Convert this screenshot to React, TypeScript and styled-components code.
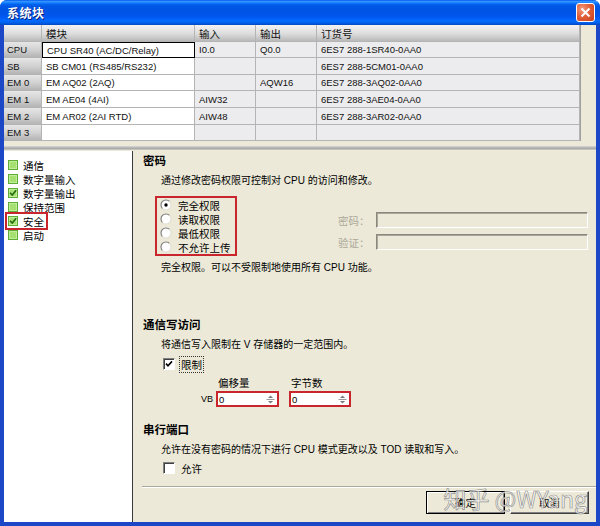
import React from 'react';
import styled, { createGlobalStyle } from 'styled-components';

const GlobalStyle = createGlobalStyle`
  html, body {
    margin: 0;
    padding: 0;
    background: #ffffff;
  }
  body {
    font-family: "Liberation Sans", "Noto Sans CJK SC", sans-serif;
    color: #000;
  }
`;

const Window = styled.div`
  position: relative;
  width: 600px;
  height: 526px;
  display: flex;
  flex-direction: column;
  background: #1c47c6;
  border-radius: 7px 7px 0 0;
  overflow: hidden;
`;

const TitleBar = styled.div`
  flex: none;
  height: 25px;
  display: flex;
  align-items: center;
  justify-content: space-between;
  padding: 0 5px 0 7px;
  background: linear-gradient(
    to bottom,
    #0058ee 0%,
    #3593ff 6%,
    #127dff 12%,
    #0262ee 18%,
    #0057e5 26%,
    #0054e3 40%,
    #0055eb 60%,
    #005bf5 72%,
    #026afe 82%,
    #0062ef 90%,
    #0048c0 100%
  );
`;

const Title = styled.span`
  color: #fff;
  font-size: 12px;
  font-weight: bold;
  letter-spacing: 0.5px;
  text-shadow: 1px 1px 0 #0a1f78;
`;

const CloseButton = styled.div`
  width: 19px;
  height: 19px;
  box-sizing: border-box;
  border: 1px solid #fff;
  border-radius: 3px;
  background: radial-gradient(circle at 30% 30%, #f09a7c 0%, #e2603a 45%, #c4401a 100%);
  display: flex;
  align-items: center;
  justify-content: center;
`;

const Frame = styled.div`
  flex: 1;
  display: flex;
  flex-direction: column;
  margin: 0 4px 4px 4px;
  background: #ece9d8;
  min-height: 0;
`;

const GridWrap = styled.div`
  flex: none;
  display: flex;
`;

const Grid = styled.div`
  display: grid;
  grid-template-columns: 38px 153px 61px 61px 263px;
  grid-template-rows: 17px 16px 17px 16px 17px 17px 16px;
  border-right: 1px solid #a0a0a0;
`;

type CellKind = 'corner' | 'head' | 'rowhead' | 'module' | 'data';

const Cell = styled.div<{ $kind: CellKind; $focus?: boolean }>`
  box-sizing: border-box;
  display: flex;
  align-items: center;
  white-space: nowrap;
  overflow: hidden;
  padding-left: ${(p) => (p.$kind === 'rowhead' || p.$kind === 'corner' ? '3px' : '4px')};
  font-size: ${(p) => (p.$kind === 'head' ? '10.5px' : '9.5px')};
  color: #111;
  border-right: 1px solid #b4b4b4;
  border-bottom: 1px solid #b4b4b4;
  background: ${(p) =>
    p.$kind === 'head' || p.$kind === 'corner'
      ? 'linear-gradient(to bottom, #f2f2f2 0%, #dcdcdc 55%, #b9b9b9 100%)'
      : p.$kind === 'rowhead'
      ? 'linear-gradient(to bottom, #e6e6e6 0%, #d2d2d2 50%, #b4b4b4 100%)'
      : p.$kind === 'module'
      ? '#ffffff'
      : '#ececee'};
  ${(p) => (p.$focus ? 'border: 1px solid #000;' : '')}
`;

const Splitter = styled.div`
  flex: none;
  height: 4px;
  margin: 5px 0 1px 0;
  background: linear-gradient(to bottom, #d8d8d8, #a8a8a8 60%, #d4d2c6);
`;

const Lower = styled.div`
  flex: 1;
  display: flex;
  min-height: 0;
`;

const Tree = styled.div`
  width: 129px;
  box-sizing: border-box;
  flex: none;
  background: #fff;
  border-right: 1px solid #3a3a3a;
  padding: 7px 0 0 4px;
`;

const TreeItem = styled.div<{ $marked?: boolean }>`
  display: flex;
  align-items: center;
  gap: 5px;
  height: 14px;
  width: ${(p) => (p.$marked ? '38px' : 'auto')};
  font-size: 10.5px;
  ${(p) => (p.$marked ? 'outline: 2px solid #c8262c; outline-offset: 0px; margin-left: -1px; padding-left: 1px;' : '')}
`;

const Content = styled.div`
  flex: 1;
  display: flex;
  flex-direction: column;
  padding: 3px 8px 8px 10px;
  min-width: 0;
`;

const Heading = styled.div<{ $gap?: number }>`
  font-size: 11.5px;
  font-weight: bold;
  line-height: 14px;
  margin-top: ${(p) => p.$gap ?? 0}px;
`;

const Desc = styled.div<{ $gap?: number }>`
  font-size: 10px;
  line-height: 14px;
  margin: ${(p) => p.$gap ?? 6}px 0 0 18px;
  white-space: nowrap;
`;

const RadioRow = styled.div`
  display: flex;
  align-items: flex-start;
  margin-top: 8px;
`;

const RadioBox = styled.div`
  margin-left: 12px;
  width: 82px;
  box-sizing: border-box;
  border: 2px solid #c8262c;
`;

const RadioItem = styled.div`
  display: flex;
  align-items: center;
  gap: 6px;
  height: 14px;
  padding-left: 3px;
  font-size: 10.5px;
  white-space: nowrap;
`;

const Fields = styled.div`
  margin-left: auto;
  margin-top: 16px;
  display: grid;
  grid-template-columns: 38px 212px;
  row-gap: 6px;
  align-items: center;
`;

const FieldLabel = styled.span`
  font-size: 10.5px;
  color: #aca899;
`;

const DisabledInput = styled.div`
  height: 16px;
  box-sizing: border-box;
  border: 1px solid;
  border-color: #8a887c #ffffff #ffffff #8a887c;
  box-shadow: inset 1px 1px 0 #a9a79a;
  background: #ece9d8;
`;

const CheckRow = styled.div<{ $gap: number }>`
  display: flex;
  align-items: center;
  gap: 5px;
  height: 14px;
  margin: ${(p) => p.$gap}px 0 0 20px;
  font-size: 10.5px;
`;

const CheckBox = styled.span`
  width: 12px;
  height: 12px;
  box-sizing: border-box;
  flex: none;
  background: #fff;
  border: 1px solid;
  border-color: #808080 #ffffff #ffffff #808080;
  box-shadow: inset 1px 1px 0 #404040;
  display: flex;
  align-items: center;
  justify-content: center;
`;

const FocusLabel = styled.span<{ $focus?: boolean }>`
  padding: 0 1px;
  outline: ${(p) => (p.$focus ? '1px dotted #333' : 'none')};
`;

const SpinArea = styled.div`
  display: flex;
  align-items: flex-end;
  margin: 5px 0 0 58px;
`;

const VbLabel = styled.span`
  font-size: 9px;
  line-height: 16px;
  width: 15px;
`;

const SpinColumn = styled.div<{ $gap?: number }>`
  display: flex;
  flex-direction: column;
  margin-left: ${(p) => p.$gap ?? 0}px;
`;

const SpinLabel = styled.span`
  font-size: 10.5px;
  line-height: 14px;
  padding-left: 2px;
  margin-bottom: 1px;
`;

const SpinBox = styled.div<{ $w: number }>`
  width: ${(p) => p.$w}px;
  height: 16px;
  box-sizing: border-box;
  border: 2px solid #c8262c;
  background: #fff;
  display: flex;
  align-items: center;
  justify-content: space-between;
  font-size: 9.5px;
  padding: 0 1px 0 1px;
`;

const Footer = styled.div`
  margin-top: auto;
  display: flex;
  flex-direction: column;
`;

const Separator = styled.div`
  height: 0;
  border-top: 1px solid #aca899;
  border-bottom: 1px solid #fff;
  margin: 0 -8px 0 -1px;
`;

const Buttons = styled.div`
  display: flex;
  justify-content: flex-end;
  gap: 5px;
  margin: 3px -1px 0 0;
`;

const Button = styled.button<{ $default?: boolean }>`
  width: 79px;
  height: 23px;
  font-family: inherit;
  font-size: 10.5px;
  color: #000;
  background: #ece9d8;
  border: 1px solid;
  border-color: ${(p) => (p.$default ? '#000' : '#fff #404040 #404040 #fff')};
  box-shadow: ${(p) =>
    p.$default
      ? 'inset 1px 1px 0 #fff, inset -1px -1px 0 #808080'
      : 'inset -1px -1px 0 #808080'};
  padding: 0;
`;

const Watermark = styled.div`
  position: absolute;
  right: 13px;
  bottom: 15px;
  font-family: "Noto Sans CJK SC", "Liberation Sans", sans-serif;
  font-size: 23px;
  line-height: 26px;
  color: rgba(255, 255, 255, 0.8);
  -webkit-text-stroke: 0.7px rgba(110, 110, 110, 0.75);
  pointer-events: none;
  white-space: nowrap;
`;

const TreeIcon: React.FC<{ checked?: boolean }> = ({ checked }) => (
  <svg width="10" height="10" viewBox="0 0 10 10">
    <rect x="0.5" y="0.5" width="9" height="9" fill="#c2ec9c" stroke="#5fae34" />
    <rect x="2" y="2" width="6" height="6" fill="#a6e070" />
    {checked && <path d="M2 4.8 L4.2 7 L8.2 2.2" stroke="#246b10" strokeWidth="1.6" fill="none" />}
  </svg>
);

const Radio: React.FC<{ checked?: boolean }> = ({ checked }) => (
  <svg width="12" height="12" viewBox="0 0 12 12">
    <circle cx="6" cy="6" r="5" fill="#fff" />
    <path d="M2.46 9.54 A5 5 0 0 1 9.54 2.46" stroke="#7a7a7a" strokeWidth="1.1" fill="none" />
    <path d="M9.54 2.46 A5 5 0 0 1 2.46 9.54" stroke="#e2dfd2" strokeWidth="1.1" fill="none" />
    {checked && <circle cx="6" cy="6" r="1.7" fill="#000" />}
  </svg>
);

const Check = () => (
  <svg width="8" height="8" viewBox="0 0 8 8">
    <path d="M1 3.6 L3 5.8 L7 1.4" stroke="#000" strokeWidth="1.6" fill="none" />
  </svg>
);

const SpinArrows = () => (
  <svg width="11" height="11" viewBox="0 0 11 11">
    <path d="M3 4 L5.5 1.5 L8 4 Z" fill="#7a7a7a" />
    <line x1="1.5" y1="5.5" x2="9.5" y2="5.5" stroke="#9a9a9a" />
    <path d="M3 7 L5.5 9.5 L8 7 Z" fill="#7a7a7a" />
  </svg>
);

const rows = [
  ['CPU', 'CPU SR40 (AC/DC/Relay)', 'I0.0', 'Q0.0', '6ES7 288-1SR40-0AA0'],
  ['SB', 'SB CM01 (RS485/RS232)', '', '', '6ES7 288-5CM01-0AA0'],
  ['EM 0', 'EM AQ02 (2AQ)', '', 'AQW16', '6ES7 288-3AQ02-0AA0'],
  ['EM 1', 'EM AE04 (4AI)', 'AIW32', '', '6ES7 288-3AE04-0AA0'],
  ['EM 2', 'EM AR02 (2AI RTD)', 'AIW48', '', '6ES7 288-3AR02-0AA0'],
  ['EM 3', '', '', '', ''],
];

const treeItems = [
  { label: '通信' },
  { label: '数字量输入' },
  { label: '数字量输出', checked: true },
  { label: '保持范围' },
  { label: '安全', checked: true, marked: true },
  { label: '启动' },
];

const levels = ['完全权限', '读取权限', '最低权限', '不允许上传'];

const App: React.FC = () => {
  return (
    <>
      <GlobalStyle />
      <Window>
        <TitleBar>
          <Title>系统块</Title>
          <CloseButton>
            <svg width="11" height="11" viewBox="0 0 11 11">
              <path d="M1.5 1.5 L9.5 9.5 M9.5 1.5 L1.5 9.5" stroke="#fff" strokeWidth="2" />
            </svg>
          </CloseButton>
        </TitleBar>

        <Frame>
          <GridWrap>
            <Grid>
              <Cell $kind="corner" />
              <Cell $kind="head">模块</Cell>
              <Cell $kind="head">输入</Cell>
              <Cell $kind="head">输出</Cell>
              <Cell $kind="head">订货号</Cell>
              {rows.map((r, i) => (
                <React.Fragment key={r[0]}>
                  <Cell $kind="rowhead">{r[0]}</Cell>
                  <Cell $kind="module" $focus={i === 0}>{r[1]}</Cell>
                  <Cell $kind="data">{r[2]}</Cell>
                  <Cell $kind="data">{r[3]}</Cell>
                  <Cell $kind="data">{r[4]}</Cell>
                </React.Fragment>
              ))}
            </Grid>
          </GridWrap>

          <Splitter />

          <Lower>
            <Tree>
              {treeItems.map((t) => (
                <TreeItem key={t.label} $marked={t.marked}>
                  <TreeIcon checked={t.checked} />
                  {t.label}
                </TreeItem>
              ))}
            </Tree>

            <Content>
              <Heading>密码</Heading>
              <Desc>通过修改密码权限可控制对 CPU 的访问和修改。</Desc>
              <RadioRow>
                <RadioBox>
                  {levels.map((l, i) => (
                    <RadioItem key={l}>
                      <Radio checked={i === 0} />
                      {l}
                    </RadioItem>
                  ))}
                </RadioBox>
                <Fields>
                  <FieldLabel>密码：</FieldLabel>
                  <DisabledInput />
                  <FieldLabel>验证：</FieldLabel>
                  <DisabledInput />
                </Fields>
              </RadioRow>
              <Desc $gap={5}>完全权限。可以不受限制地使用所有 CPU 功能。</Desc>

              <Heading $gap={43}>通信写访问</Heading>
              <Desc>将通信写入限制在 V 存储器的一定范围内。</Desc>
              <CheckRow $gap={5}>
                <CheckBox>
                  <Check />
                </CheckBox>
                <FocusLabel $focus>限制</FocusLabel>
              </CheckRow>
              <SpinArea>
                <VbLabel>VB</VbLabel>
                <SpinColumn>
                  <SpinLabel>偏移量</SpinLabel>
                  <SpinBox $w={63}>
                    0
                    <SpinArrows />
                  </SpinBox>
                </SpinColumn>
                <SpinColumn $gap={10}>
                  <SpinLabel>字节数</SpinLabel>
                  <SpinBox $w={62}>
                    0
                    <SpinArrows />
                  </SpinBox>
                </SpinColumn>
              </SpinArea>

              <Heading $gap={16}>串行端口</Heading>
              <Desc>允许在没有密码的情况下进行 CPU 模式更改以及 TOD 读取和写入。</Desc>
              <CheckRow $gap={4}>
                <CheckBox />
                <FocusLabel>允许</FocusLabel>
              </CheckRow>

              <Footer>
                <Separator />
                <Buttons>
                  <Button $default>确定</Button>
                  <Button>取消</Button>
                </Buttons>
              </Footer>
            </Content>
          </Lower>
        </Frame>

        <Watermark>知乎 @WYang</Watermark>
      </Window>
    </>
  );
};

export default App;
